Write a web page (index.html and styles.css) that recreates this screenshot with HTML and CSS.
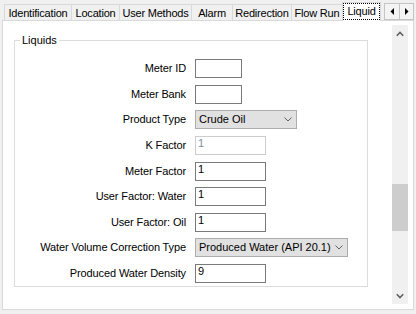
FILE: index.html
```html
<!DOCTYPE html>
<html>
<head>
<meta charset="utf-8">
<link rel="stylesheet" href="styles.css">
</head>
<body>
<div class="tabctl">
  <div class="strip">
    <div class="tab t1">Identification</div>
    <div class="tab t2">Location</div>
    <div class="tab t3">User Methods</div>
    <div class="tab t4">Alarm</div>
    <div class="tab t5">Redirection</div>
    <div class="tab t6">Flow Run</div>
    <div class="tab sel">Liquid</div>
    <div class="spin">
      <div class="sbtn"><svg width="4" height="7" viewBox="0 0 4 7"><polygon points="4,0 4,7 0.5,3.5" fill="#000"/></svg></div>
      <div class="sbtn next"><svg width="4" height="7" viewBox="0 0 4 7"><polygon points="0,0 0,7 3.5,3.5" fill="#000"/></svg></div>
    </div>
  </div>
  <div class="page">
    <div class="scroller">
      <div class="content">
        <fieldset class="group">
          <legend>Liquids</legend>
          <div class="form">
            <div class="lbl">Meter ID</div>
            <div class="tb short"></div>
            <div class="lbl">Meter Bank</div>
            <div class="tb short"></div>
            <div class="lbl">Product Type</div>
            <div class="cb w1"><span>Crude Oil</span><svg width="8" height="5" viewBox="0 0 8 5"><polyline points="0.5,0.5 4,4 7.5,0.5" fill="none" stroke="#606060" stroke-width="1"/></svg></div>
            <div class="lbl">K Factor</div>
            <div class="tb dis">1</div>
            <div class="lbl">Meter Factor</div>
            <div class="tb">1</div>
            <div class="lbl">User Factor: Water</div>
            <div class="tb">1</div>
            <div class="lbl">User Factor: Oil</div>
            <div class="tb">1</div>
            <div class="lbl">Water Volume Correction Type</div>
            <div class="cb w2"><span>Produced Water (API 20.1)</span><svg width="8" height="5" viewBox="0 0 8 5"><polyline points="0.5,0.5 4,4 7.5,0.5" fill="none" stroke="#606060" stroke-width="1"/></svg></div>
            <div class="lbl">Produced Water Density</div>
            <div class="tb">9</div>
          </div>
        </fieldset>
      </div>
      <div class="vscroll">
        <div class="arrow"><svg width="8" height="6" viewBox="0 0 8 6"><polyline points="0.8,4.8 4,1.5 7.2,4.8" fill="none" stroke="#606060" stroke-width="1.6"/></svg></div>
        <div class="track"><div class="thumb"></div></div>
        <div class="arrow"><svg width="8" height="6" viewBox="0 0 8 6"><polyline points="0.8,1.2 4,4.5 7.2,1.2" fill="none" stroke="#606060" stroke-width="1.6"/></svg></div>
      </div>
    </div>
  </div>
</div>
</body>
</html>
```
FILE: styles.css
```css
html, body {
  margin: 0;
  padding: 0;
}
body {
  width: 416px;
  height: 314px;
  overflow: hidden;
  background: #f0f0f0;
  font-family: "Liberation Sans", Arial, sans-serif;
  font-size: 11px;
  color: #000;
}
.strip {
  display: flex;
  align-items: flex-end;
  height: 20px;
  padding-left: 4px;
  padding-right: 2px;
}
.tab {
  box-sizing: border-box;
  height: 16px;
  border: 1px solid #d9d9d9;
  border-bottom: none;
  margin-right: -1px;
  padding-top: 1px;
  background: #f0f0f0;
  text-align: center;
  line-height: 14px;
  white-space: nowrap;
  letter-spacing: -0.2px;
}
.t1 { width: 68px; }
.t2 { width: 49px; }
.t3 { width: 73px; }
.t4 { width: 42px; }
.t5 { width: 60px; }
.t6 { width: 52px; }
.tab.sel {
  position: relative;
  z-index: 1;
  width: 39px;
  height: 19px;
  margin-bottom: -1px;
  background: #fff;
  outline: 1px dotted #000;
  outline-offset: -2px;
}
.spin {
  display: flex;
  align-self: flex-start;
  margin-top: 3px;
  margin-left: auto;
}
.sbtn {
  box-sizing: border-box;
  width: 16px;
  height: 17px;
  border: 1px solid #c4c4c4;
  background: #f4f4f4;
  display: flex;
  align-items: center;
  justify-content: center;
}
.sbtn.next {
  width: 15px;
  margin-left: -1px;
}
.page {
  box-sizing: border-box;
  width: 412px;
  height: 290px;
  margin-left: 2px;
  border: 1px solid #d9d9d9;
  background: #fff;
  padding: 4px 5px 5px 4px;
}
.scroller {
  display: flex;
  height: 100%;
}
.content {
  flex: 1;
  padding: 0 24px 0 7px;
}
.group {
  border: 1px solid #dcdcdc;
  margin: 9px 0 0 0;
  padding: 0 0 3px 0;
  min-width: 0;
}
.group legend {
  margin-left: 5px;
  padding: 0 2px;
  line-height: 13px;
}
.form {
  display: grid;
  grid-template-columns: 171px max-content;
  column-gap: 9px;
  grid-auto-rows: 19px;
  row-gap: 6.625px;
  margin-top: 12px;
}
.lbl {
  text-align: right;
  line-height: 19px;
  white-space: nowrap;
  letter-spacing: -0.12px;
}
.tb {
  box-sizing: border-box;
  width: 71px;
  height: 19px;
  border: 1px solid #7a7a7a;
  padding-left: 2px;
  line-height: 13px;
}
.tb.short { width: 47px; }
.tb.dis {
  border-color: #cccccc;
  color: #7d8ea3;
}
.cb {
  box-sizing: border-box;
  height: 19px;
  border: 1px solid #adadad;
  background: #e1e1e1;
  display: flex;
  align-items: center;
  justify-content: space-between;
  padding: 0 4px 0 3px;
  line-height: 17px;
  white-space: nowrap;
}
.cb.w1 { width: 102px; }
.cb.w2 { width: 153px; }
.vscroll {
  width: 16px;
  background: #f0f0f0;
  display: flex;
  flex-direction: column;
}
.arrow {
  height: 17px;
  display: flex;
  align-items: center;
  justify-content: center;
}
.track {
  flex: 1;
}
.thumb {
  margin-top: 142px;
  height: 47px;
  background: #cdcdcd;
}
```
